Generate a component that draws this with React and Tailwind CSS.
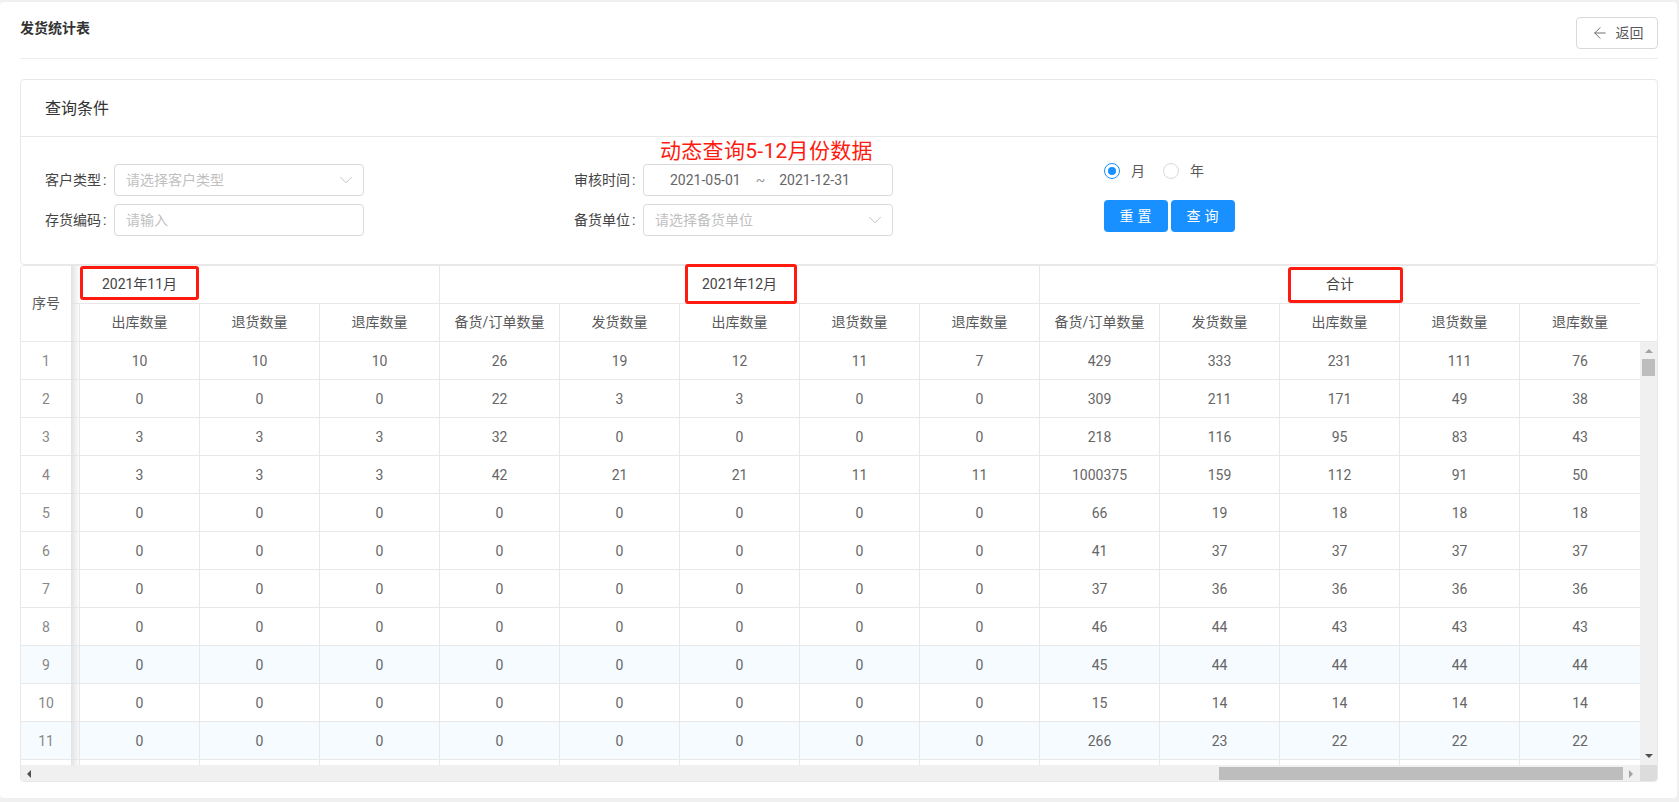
import { ArrowLeft, ChevronDown } from "lucide-react";

const groups = ["2021年11月", "2021年12月", "合计"];
const cols = ["备货/订单数量", "发货数量", "出库数量", "退货数量", "退库数量"];

// first two columns of the table are scrolled out of view
const rows = [
  [10, 10, 10, 26, 19, 12, 11, 7, 429, 333, 231, 111, 76],
  [0, 0, 0, 22, 3, 3, 0, 0, 309, 211, 171, 49, 38],
  [3, 3, 3, 32, 0, 0, 0, 0, 218, 116, 95, 83, 43],
  [3, 3, 3, 42, 21, 21, 11, 11, 1000375, 159, 112, 91, 50],
  [0, 0, 0, 0, 0, 0, 0, 0, 66, 19, 18, 18, 18],
  [0, 0, 0, 0, 0, 0, 0, 0, 41, 37, 37, 37, 37],
  [0, 0, 0, 0, 0, 0, 0, 0, 37, 36, 36, 36, 36],
  [0, 0, 0, 0, 0, 0, 0, 0, 46, 44, 43, 43, 43],
  [0, 0, 0, 0, 0, 0, 0, 0, 45, 44, 44, 44, 44],
  [0, 0, 0, 0, 0, 0, 0, 0, 15, 14, 14, 14, 14],
  [0, 0, 0, 0, 0, 0, 0, 0, 266, 23, 22, 22, 22],
  ["", "", "", "", "", "", "", "", "", "", "", "", ""],
];

const headCols = [...cols.map((c, i) => (i < 2 ? "" : c)), ...cols, ...cols];
const isBlue = (i) => i === 8 || i === 10;

function Field({ label, children }) {
  return (
    <div className="flex items-center h-8">
      <span className="w-[61px] shrink-0 text-[14px] text-[#444444] whitespace-nowrap">
        {label}<span className="ml-[2px]">:</span>
      </span>
      <div className="ml-[8px] w-[250px] h-8 border border-[#d9d9d9] rounded bg-white flex items-center justify-between px-[11px] text-[14px]">
        {children}
      </div>
    </div>
  );
}

function Radio({ checked, label }) {
  return (
    <div className="flex items-center gap-[11px] w-[59px]">
      <span className={`w-4 h-4 rounded-full border flex items-center justify-center ${checked ? "border-[#1890ff]" : "border-[#d9d9d9]"}`}>
        {checked && <span className="w-2 h-2 rounded-full bg-[#1890ff]" />}
      </span>
      <span className="text-[14px] text-[#595959]">{label}</span>
    </div>
  );
}

export default function App() {
  return (
    <div className="relative h-[802px] w-[1679px] overflow-hidden bg-[#f0f0f0] pt-[2px] font-['Roboto','Noto_Sans_CJK_SC',sans-serif]">
      <div className="w-[1677px] h-[796px] bg-white rounded pl-5 pr-[19px]">

        {/* title bar */}
        <div className="h-[57px] border-b border-[#eeeeee] flex justify-between">
          <h1 className="mt-[16px] text-[14px] leading-[20px] font-bold text-[#333333]">发货统计表</h1>
          <button className="mt-[15px] w-[82px] h-8 border border-[#d9d9d9] rounded flex items-center justify-center gap-[7px] text-[14px] text-[#595959]">
            <ArrowLeft size={18} strokeWidth={1.25} className="text-[#666666]" />
            返回
          </button>
        </div>

        {/* query card */}
        <div className="mt-5 h-[186px] w-[1638px] border border-[#e8e8e8] rounded-sm">
          <div className="h-[57px] border-b border-[#e8e8e8] flex items-center pl-6 pt-[2px] text-[16px] text-[#333333]">查询条件</div>
          <div className="flex pl-6 pt-[27px]">
            <div className="w-[529px] flex flex-col gap-2">
              <Field label="客户类型">
                <span className="text-[#bfbfbf]">请选择客户类型</span>
                <ChevronDown size={22} strokeWidth={1} className="text-[#bfbfbf] -mr-[5px]" />
              </Field>
              <Field label="存货编码">
                <span className="text-[#bfbfbf]">请输入</span>
              </Field>
            </div>
            <div className="w-[530px] flex flex-col gap-2">
              <Field label="审核时间">
                <div className="flex items-center pl-[15px] text-[#666666]">
                  <span>2021-05-01</span>
                  <span className="ml-[15px] text-[#999999]">~</span>
                  <span className="ml-[14px]">2021-12-31</span>
                </div>
              </Field>
              <Field label="备货单位">
                <span className="text-[#bfbfbf]">请选择备货单位</span>
                <ChevronDown size={22} strokeWidth={1} className="text-[#bfbfbf] -mr-[5px]" />
              </Field>
            </div>
            <div className="-mt-[1px]">
              <div className="flex h-4 items-center">
                <Radio checked label="月" />
                <Radio label="年" />
              </div>
              <div className="flex gap-[3px] mt-[21px]">
                <button className="w-16 h-8 rounded bg-[#1890ff] text-white text-[14px] tracking-[4px] pl-[3px]">重置</button>
                <button className="w-16 h-8 rounded bg-[#1890ff] text-white text-[14px] tracking-[4px] pl-[3px]">查询</button>
              </div>
            </div>
          </div>
        </div>

        {/* table */}
        <div className="relative h-[517px] w-[1638px] border border-[#e8e8e8] rounded-sm overflow-hidden text-[14px] text-[#595959]">
          <div className="flex h-[499px]">

            {/* fixed first column */}
            <div className="w-[50px] shrink-0 overflow-hidden text-[#888888] z-10 bg-white">
              <div className="h-[76px] border-b border-[#e8e8e8] flex items-center justify-center text-[#595959]">序号</div>
              {rows.map((_, i) => (
                <div key={i} className={`h-[38px] pt-[1px] border-b border-[#e8e8e8] flex items-center justify-center ${isBlue(i) ? "bg-[#f5fbff]" : ""}`}>
                  {i < 11 ? i + 1 : ""}
                </div>
              ))}
            </div>

            <div className="relative flex-1 min-w-0 flex flex-col">
              {/* shadow of the fixed column */}
              <div className="absolute left-0 top-0 bottom-0 w-[9px] bg-gradient-to-r from-[#e2e2e2] to-transparent z-10" />

              {/* header */}
              <div className="flex h-[76px] shrink-0">
                <div className="w-[1569px] overflow-hidden flex justify-end">
                  <div className="w-[1800px] shrink-0">
                    <div className="flex h-[38px]">
                      {groups.map((g, i) => (
                        <div key={g} className={`w-[600px] border-b border-[#e8e8e8] flex items-center justify-center text-[#444444] ${i < 2 ? "border-r" : ""}`}>{g}</div>
                      ))}
                    </div>
                    <div className="flex h-[38px]">
                      {headCols.map((c, i) => (
                        <div key={i} className={`w-[120px] border-b border-[#e8e8e8] flex items-center justify-center ${i < 14 ? "border-r" : ""}`}>{c}</div>
                      ))}
                    </div>
                  </div>
                </div>
                <div className="flex-1 border-b border-[#e8e8e8]" />
              </div>

              {/* body + vertical scrollbar */}
              <div className="flex flex-1 min-h-0">
                <div className="w-[1569px] overflow-hidden flex justify-end">
                  <div className="w-[1800px] shrink-0 text-[#666666]">
                    {rows.map((r, i) => (
                      <div key={i} className={`flex h-[38px] ${isBlue(i) ? "bg-[#f5fbff]" : ""}`}>
                        {["", "", ...r].map((v, j) => (
                          <div key={j} className={`w-[120px] pt-[1px] border-b border-[#e8e8e8] flex items-center justify-center ${j < 14 ? "border-r" : ""}`}>{v}</div>
                        ))}
                      </div>
                    ))}
                  </div>
                </div>
                <div className="flex-1 bg-[#f0f0f0] flex flex-col items-center pt-[7px]">
                  <span className="w-0 h-0 border-x-[4px] border-x-transparent border-b-[4px] border-b-[#a3a3a3]" />
                  <div className="mt-[6px] w-[13px] h-[17px] bg-[#bdbdbd]" />
                  <span className="mt-auto mb-[7px] w-0 h-0 border-x-[4px] border-x-transparent border-t-[4px] border-t-[#505050]" />
                </div>
              </div>
            </div>
          </div>

          {/* horizontal scrollbar */}
          <div className="flex h-[17px] bg-[#f0f0f0]">
            <div className="flex-1 flex items-center pl-[6px] pr-[7px]">
              <span className="w-0 h-0 border-y-[4px] border-y-transparent border-r-[4px] border-r-[#505050]" />
              <div className="ml-auto w-[404px] h-[13px] bg-[#bdbdbd]" />
              <span className="ml-[6px] w-0 h-0 border-y-[4px] border-y-transparent border-l-[4px] border-l-[#a3a3a3]" />
            </div>
            <div className="w-[17px] bg-[#dcdcdc]" />
          </div>
        </div>
      </div>

      {/* red annotations drawn over the screenshot */}
      <div className="absolute left-[660px] top-[136px] text-[21px] tracking-[0.3px] leading-[30px] text-[#ff1a0f] whitespace-nowrap">动态查询5-12月份数据</div>
      <div className="absolute left-[80px] top-[266px] w-[119px] h-[34px] border-[3px] border-[#ff1a0f] rounded-[3px]" />
      <div className="absolute left-[685px] top-[264px] w-[112px] h-[40px] border-[3px] border-[#ff1a0f] rounded-[3px]" />
      <div className="absolute left-[1288px] top-[267px] w-[115px] h-[36px] border-[3px] border-[#ff1a0f] rounded-[3px]" />
    </div>
  );
}
